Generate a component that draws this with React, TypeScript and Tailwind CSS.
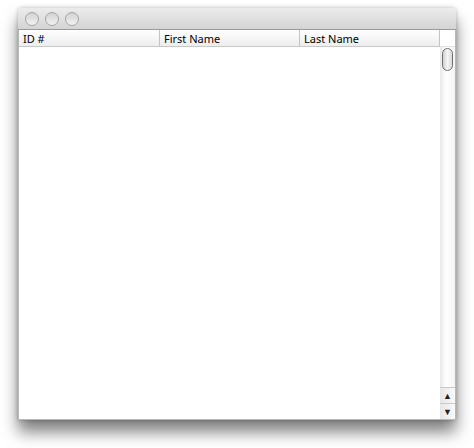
import React from "react";

const columns = [
  { label: "ID #", width: "w-[141px]" },
  { label: "First Name", width: "w-[140px]" },
  { label: "Last Name", width: "w-[140px]" },
];

function TrafficLight() {
  return (
    <div className="h-[14px] w-[14px] rounded-full border border-[#a4a4a4] bg-[linear-gradient(#d2d2d2,#f2f2f2)]" />
  );
}

export default function App() {
  return (
    <div className="h-[448px] w-[474px] bg-white pl-[18px] pt-[8px] font-['Noto_Sans',sans-serif]">
      <div className="flex h-[412px] w-[438px] flex-col rounded-t-[4px] shadow-[0_12px_16px_rgba(0,0,0,0.5),0_0_4px_rgba(0,0,0,0.25)]">
        {/* title bar */}
        <div className="flex h-[22px] items-center gap-[6px] rounded-t-[4px] border-b border-[#9a9a9a] bg-[linear-gradient(#ececec,#d4d4d4)] pl-[7px]">
          <TrafficLight />
          <TrafficLight />
          <TrafficLight />
        </div>

        <div className="flex flex-1 border-x border-b border-[#b8b8b8] bg-white">
          {/* table */}
          <div className="flex flex-1 flex-col">
            <div className="flex h-[17px] border-b border-[#c8c8c8] bg-[linear-gradient(#ffffff,#ededed)]">
              {columns.map((c) => (
                <div
                  key={c.label}
                  className={`${c.width} flex items-center border-r border-[#c4c4c4] pl-[4px] text-[11px] leading-none text-black`}
                >
                  {c.label}
                </div>
              ))}
            </div>
            <div className="flex-1 bg-white" />
          </div>

          {/* vertical scrollbar */}
          <div className="flex w-[16px] flex-col">
            <div className="h-[17px] border-b border-[#e2e2e2] bg-white" />
            <div className="flex flex-1 flex-col bg-[linear-gradient(90deg,#e8e8e8,#ffffff_40%,#f4f4f4)]">
              <div className="mx-auto mt-[1px] h-[23px] w-[11px] rounded-full border border-[#6f6f6f] bg-[linear-gradient(90deg,#cfcfcf,#f6f6f6_50%,#d8d8d8)]" />
              <div className="flex-1" />
              <div className="flex h-[16px] items-center justify-center border-t border-[#c9c9c9] bg-[linear-gradient(90deg,#e6e6e6,#fafafa)] text-[9px] leading-none text-[#222]">
                ▲
              </div>
              <div className="flex h-[16px] items-center justify-center border-t border-[#c9c9c9] bg-[linear-gradient(90deg,#e6e6e6,#fafafa)] text-[9px] leading-none text-[#222]">
                ▼
              </div>
            </div>
          </div>
        </div>
      </div>
    </div>
  );
}
